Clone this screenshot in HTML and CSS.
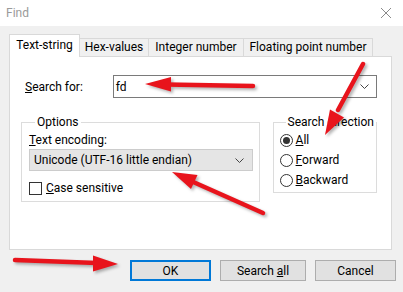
FILE: index.html
```html
<!DOCTYPE html>
<html lang="en">
<head>
    <meta charset="UTF-8">
    <title>Find</title>
    <link rel="stylesheet" href="styles.css">
</head>
<body>
    <div id="dialog">
        <!-- Title bar -->
        <div class="titlebar">
            <span class="title">Find</span>
            <svg class="close" width="12" height="12" viewBox="0 0 12 12">
                <path d="M1 1L11 11M11 1L1 11" stroke="#8a8a8a" stroke-width="1" fill="none"/>
            </svg>
        </div>

        <div class="body">
            <div class="tabs">
                <div class="tab active">Text-string</div>
                <div class="tab">Hex-values</div>
                <div class="tab">Integer number</div>
                <div class="tab">Floating point number</div>
            </div>

            <div class="panel">
                <div class="search-row">
                    <label class="search-label"><u>S</u>earch for:</label>
                    <div class="combo">
                        <span>fd</span>
                        <svg class="chevron" width="9" height="5" viewBox="0 0 9 5"><path d="M0.5 0.5L4.5 4.5L8.5 0.5" stroke="#444" fill="none"/></svg>
                    </div>
                </div>

                <div class="groups">
                    <fieldset class="group options">
                        <legend>Options</legend>
                        <div class="field-label"><u>T</u>ext encoding:</div>
                        <div class="select">
                            <span>Unicode (UTF-16 little endian)</span>
                            <svg class="chevron" width="9" height="5" viewBox="0 0 9 5"><path d="M0.5 0.5L4.5 4.5L8.5 0.5" stroke="#444" fill="none"/></svg>
                        </div>
                        <div class="check-row">
                            <span class="checkbox"></span>
                            <span><u>C</u>ase sensitive</span>
                        </div>
                    </fieldset>

                    <fieldset class="group direction">
                        <legend>Search direction</legend>
                        <div class="radio-row"><span class="radio checked"></span><span><u>A</u>ll</span></div>
                        <div class="radio-row"><span class="radio"></span><span><u>F</u>orward</span></div>
                        <div class="radio-row"><span class="radio"></span><span><u>B</u>ackward</span></div>
                    </fieldset>
                </div>
            </div>

            <div class="buttons">
                <button class="btn default">OK</button>
                <button class="btn">Search <u>a</u>ll</button>
                <button class="btn">Cancel</button>
            </div>
        </div>

        <!-- Red annotation arrows drawn over the dialog -->
        <svg class="arrows" width="403" height="292" viewBox="0 0 403 292">
            <g fill="#e8141c" stroke="#e8141c" stroke-linecap="round">
                <line x1="253" y1="86" x2="166" y2="84.5" stroke-width="4.5"/>
                <polygon points="145,84 171,77 171,91.5" stroke="none"/>

                <line x1="363" y1="64" x2="338" y2="110" stroke-width="4.5"/>
                <polygon points="325,135 344,117.5 330,109.5" stroke="none"/>

                <line x1="263" y1="213" x2="191" y2="181" stroke-width="4.5"/>
                <polygon points="172,172 197.5,175 191,189" stroke="none"/>

                <line x1="15" y1="260" x2="97" y2="263" stroke-width="4.5"/>
                <polygon points="118,264 93,255.5 93,271.5" stroke="none"/>
            </g>
        </svg>
    </div>
</body>
</html>
```

FILE: styles.css
```css
body {
    margin: 0;
    padding: 0;
    background-color: #f0f0f0;
    font-family: Roboto, "Noto Sans", sans-serif;
    font-size: 12px;
    color: #000;
}

#dialog {
    position: relative;
    width: 403px;
    height: 292px;
    overflow: hidden;
}

.titlebar {
    height: 26px;
    background-color: #fff;
    display: flex;
    align-items: center;
    justify-content: space-between;
    padding: 0 11px 0 6px;
    box-sizing: border-box;
}

.title {
    color: #9a9a9a;
    font-size: 12px;
}

.body {
    padding: 8px 9px 0 9px;
}

/* Tabs */
.tabs {
    display: flex;
    align-items: flex-end;
    height: 22px;
    position: relative;
    z-index: 1;
}

.tab {
    height: 18px;
    line-height: 17px;
    border: 1px solid #d9d9d9;
    border-bottom: none;
    border-left: none;
    background-color: #f0f0f0;
    box-sizing: border-box;
    white-space: nowrap;
    text-align: center;
}

.tab.active {
    height: 23px;
    line-height: 20px;
    background-color: #fff;
    border-left: 1px solid #d9d9d9;
    margin-bottom: -1px;
    width: 71px;
}

.tab:nth-child(2) { width: 69px; }
.tab:nth-child(3) { width: 95px; }
.tab:nth-child(4) { width: 129px; }

.panel {
    width: 383px;
    height: 194px;
    background-color: #fff;
    border: 1px solid #d9d9d9;
    box-sizing: border-box;
    padding: 18px 14px 0 11px;
}

.search-row {
    display: flex;
    align-items: center;
}

.search-label {
    width: 92px;
    padding-left: 4px;
    box-sizing: border-box;
}

.combo {
    width: 265px;
    height: 23px;
    border: 1px solid #7a7a7a;
    box-sizing: border-box;
    display: flex;
    align-items: center;
    justify-content: space-between;
    padding: 0 7px 0 2px;
}

.chevron {
    display: block;
}

/* Group boxes */
.groups {
    display: flex;
    align-items: flex-start;
    margin-top: 16px;
}

.group {
    margin: 0;
    border: 1px solid #dcdcdc;
    padding: 0;
    box-sizing: border-box;
}

.group legend {
    padding: 0 2px;
    margin-left: 6px;
    line-height: 16px;
    white-space: nowrap;
}

.options {
    width: 248px;
    height: 88px;
    padding: 2px 6px 0 7px;
}

.field-label {
    line-height: 16px;
}

.select {
    margin-top: 1px;
    height: 22px;
    background-color: #e5e5e5;
    border: 1px solid #cccccc;
    box-sizing: border-box;
    display: flex;
    align-items: center;
    justify-content: space-between;
    padding: 0 8px 0 4px;
}

.check-row {
    display: flex;
    align-items: center;
    margin-top: 10px;
    gap: 4px;
}

.checkbox {
    width: 13px;
    height: 13px;
    border: 1px solid #333;
    box-sizing: border-box;
    background-color: #fff;
}

.direction {
    width: 96px;
    height: 79px;
    margin-left: 13px;
    padding: 0 0 0 6px;
}

.radio-row {
    display: flex;
    align-items: center;
    gap: 3px;
    height: 20px;
}

.radio {
    width: 13px;
    height: 13px;
    border: 1px solid #333;
    border-radius: 50%;
    box-sizing: border-box;
    position: relative;
}

.radio.checked::after {
    content: "";
    position: absolute;
    left: 2px;
    top: 2px;
    width: 7px;
    height: 7px;
    border-radius: 50%;
    background-color: #333;
}

/* Buttons */
.buttons {
    display: flex;
    justify-content: flex-end;
    gap: 9px;
    margin-top: 10px;
    margin-right: -2px;
}

.btn {
    height: 21px;
    background-color: #e1e1e1;
    border: 1px solid #adadad;
    font-family: inherit;
    font-size: 12px;
    color: #000;
    padding: 0;
    width: 81px;
}

.btn:nth-child(2) { width: 86px; }

.btn.default {
    border: 2px solid #0078d7;
}

.arrows {
    position: absolute;
    top: 0;
    left: 0;
    pointer-events: none;
    filter: drop-shadow(2px 2px 1.5px rgba(0, 0, 0, 0.3));
}
```
